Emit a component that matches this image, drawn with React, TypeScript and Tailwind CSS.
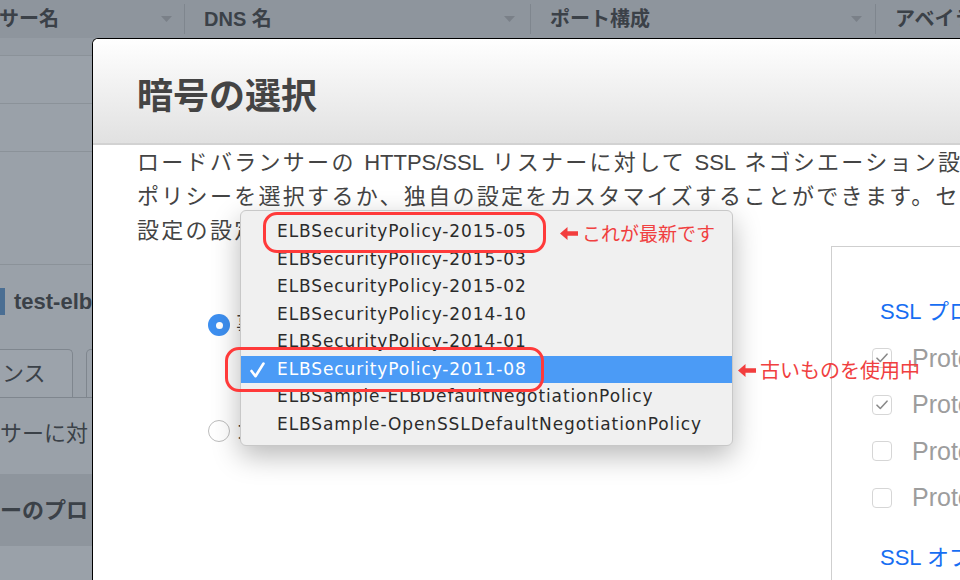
const menuItems = [
  "ELBSecurityPolicy-2015-05",
  "ELBSecurityPolicy-2015-03",
  "ELBSecurityPolicy-2015-02",
  "ELBSecurityPolicy-2014-10",
  "ELBSecurityPolicy-2014-01",
  "ELBSecurityPolicy-2011-08",
  "ELBSample-ELBDefaultNegotiationPolicy",
  "ELBSample-OpenSSLDefaultNegotiationPolicy",
];
const selected = "ELBSecurityPolicy-2011-08";

function Caret() {
  return (
    <svg width="11" height="6" viewBox="0 0 11 6" aria-hidden="true">
      <path d="M0 0h11L5.5 6z" fill="#7a8088" />
    </svg>
  );
}

function RedArrow() {
  return (
    <svg width="18" height="13" viewBox="0 0 18 13" aria-hidden="true">
      <path d="M0 6.5L7.5 0v4.2H18v4.6H7.5V13z" fill="#f23d3d" />
    </svg>
  );
}

function Checkbox({ checked }: { checked?: boolean }) {
  return (
    <div className="grid h-[20px] w-[20px] shrink-0 place-items-center rounded-[4px] border border-[#d6d6d6] bg-white">
      {checked ? (
        <svg width="12" height="10" viewBox="0 0 12 10" fill="none" aria-hidden="true">
          <path d="M1 5.2l3.3 3.3L11 1.2" stroke="#8a8a8a" strokeWidth="1.6" strokeLinecap="round" strokeLinejoin="round" />
        </svg>
      ) : null}
    </div>
  );
}

export default function App() {
  return (
    <div className="relative h-[580px] w-[960px] overflow-hidden bg-[#9aa1a9] font-['Liberation_Sans','Noto_Sans_CJK_JP',sans-serif]">
      {/* dimmed console page behind the dialog */}
      <div className="flex flex-col text-[#3b4148]">
        <div className="flex h-[38px] items-center whitespace-nowrap bg-[#8e959d] text-[20px] font-bold">
          <div className="flex h-[30px] w-[185px] shrink-0 items-center justify-between border-r border-[#7f868e] pr-[12px]">
            <span className="-ml-[1px]">サー名</span>
            <Caret />
          </div>
          <div className="flex h-[30px] w-[346px] shrink-0 items-center justify-between border-r border-[#7f868e] pl-[19px] pr-[15px]">
            <span>DNS 名</span>
            <Caret />
          </div>
          <div className="flex h-[30px] w-[345px] shrink-0 items-center justify-between border-r border-[#7f868e] pl-[19px] pr-[13px]">
            <span>ポート構成</span>
            <Caret />
          </div>
          <div className="shrink-0 pl-[19px]">アベイラビリティーゾーン</div>
        </div>
        <div className="h-[18px] border-b border-[#8b9299] bg-[#959ca4]" />
        <div className="h-[48px] border-b border-[#8b9299]" />
        <div className="h-[48px] border-b border-[#8b9299]" />
        <div className="h-[113px] border-b border-[#8b9299]" />
        <div className="h-[85px] pt-[22px]">
          <div className="flex h-[28px] items-center">
            <div className="h-[27px] w-[5px] bg-[#4a6e93]" />
            <span className="ml-[9px] text-[22px] font-bold">test-elb</span>
          </div>
        </div>
        <div className="flex h-[48px] items-end border-b border-[#7f868e]">
          <div className="flex h-[48px] w-[73px] shrink-0 items-center rounded-tr-[5px] border-r border-t border-[#7f868e] bg-[#9ca3ab] text-[22px]">
            <span className="pl-[2px]">ンス</span>
          </div>
          <div className="ml-[13px] h-[48px] w-[150px] shrink-0 rounded-t-[5px] border-l border-r border-t border-[#7f868e]" />
        </div>
        <div className="h-[76px] whitespace-nowrap pt-[21px] text-[22px] leading-[30px]">サーに対して</div>
        <div className="flex h-[72px] items-center whitespace-nowrap bg-[#8e959d] text-[22px] font-bold">ーのプロトコル</div>
      </div>

      {/* dialog */}
      <div className="absolute left-[92px] top-[38px] h-[560px] w-[900px] overflow-hidden rounded-tl-[6px] border-l border-t border-black bg-white">
        <div className="h-[106px] border-b-2 border-[#d2d2d2] bg-gradient-to-b from-white to-[#e1e1e1] pl-[44px] pt-[36px]">
          <h1 className="text-[36px] font-bold leading-[44px] text-[#444]">暗号の選択</h1>
        </div>
        <div className="pl-[44px] pt-[1px]">
          <div className="whitespace-nowrap text-[22px] leading-[34px] tracking-[2.3px] text-[#444]">
            <p>
              ロードバランサーの <span className="tracking-normal">HTTPS/SSL</span> リスナーに対して{" "}
              <span className="tracking-normal">SSL</span> ネゴシエーション設定を行います。
            </p>
            <p>ポリシーを選択するか、独自の設定をカスタマイズすることができます。セキュリティ</p>
            <p>設定の設定を変更できます。</p>
          </div>
          <div className="flex">
            <div className="flex w-[694px] shrink-0 flex-col pl-[71px] text-[22px] text-[#444]">
              <div className="mt-[66px] flex items-center gap-[6px] whitespace-nowrap">
                <div className="grid h-[22px] w-[22px] shrink-0 place-items-center rounded-full bg-[#3d8ff0]">
                  <div className="h-[7px] w-[7px] rounded-full bg-white" />
                </div>
                <span className="leading-[22px]">事前定義されたセキュリティポリシー</span>
              </div>
              <div className="mt-[84px] flex items-center gap-[6px] whitespace-nowrap">
                <div className="h-[22px] w-[22px] shrink-0 rounded-full border border-[#bdbdbd] bg-white" />
                <span className="leading-[22px]">カスタムセキュリティポリシー</span>
              </div>
            </div>
            <div className="-mt-[2px] h-[400px] w-[200px] shrink-0 border-l border-t border-[#cfcfcf] pl-[40px] pt-[50px]">
              <div className="ml-[8px] whitespace-nowrap text-[22px] leading-[30px] text-[#176ef2]">SSL プロトコル</div>
              <div className="mt-[8px] flex flex-col">
                {[true, true, false, false].map((c, i) => (
                  <div key={i} className="flex h-[46.5px] items-center gap-[20px]">
                    <Checkbox checked={c} />
                    <span className="whitespace-nowrap text-[25px] text-[#9d9d9d]">Protocol</span>
                  </div>
                ))}
              </div>
              <div className="ml-[8px] mt-[22px] whitespace-nowrap text-[22px] leading-[30px] text-[#176ef2]">SSL オプション</div>
            </div>
          </div>
        </div>
      </div>

      {/* open select menu */}
      <div className="absolute left-[240px] top-[210px] w-[493px] rounded-[6px] border border-[#c8c8c8] bg-[#f0f0f0] py-[7px] font-['DejaVu_Sans',sans-serif] text-[17px] tracking-[0.9px] text-[#2b2b2b] shadow-[0_10px_28px_rgba(0,0,0,0.28)]">
        {menuItems.map((item) => {
          const on = item === selected;
          return (
            <div
              key={item}
              className={
                on
                  ? "relative flex h-[27.5px] items-center bg-[#4b9bf6] pl-[36px] text-white"
                  : "relative flex h-[27.5px] items-center pl-[36px]"
              }
            >
              {on ? (
                <svg className="absolute left-[9px] top-[6px]" width="15" height="16" viewBox="0 0 15 16" fill="none" aria-hidden="true">
                  <path d="M1.5 9l4 5.2L13.5 1.5" stroke="white" strokeWidth="2.6" strokeLinecap="round" strokeLinejoin="round" />
                </svg>
              ) : null}
              {item}
            </div>
          );
        })}
      </div>

      {/* red annotations */}
      <div className="absolute left-[263px] top-[212px] h-[41px] w-[283px] rounded-[14px] border-[3px] border-[#ff3a3a]" />
      <div className="absolute left-[225px] top-[347px] h-[45px] w-[319px] rounded-[14px] border-[3px] border-[#ff3a3a]" />
      <div className="absolute left-[560px] top-[221px] flex items-center gap-[4px] whitespace-nowrap font-['Noto_Sans_CJK_JP',sans-serif] text-[19px] leading-[24px] text-[#f04040]">
        <RedArrow />
        <span>これが最新です</span>
      </div>
      <div className="absolute left-[738px] top-[358px] flex items-center gap-[4px] whitespace-nowrap font-['Noto_Sans_CJK_JP',sans-serif] text-[20px] leading-[24px] text-[#f04040]">
        <RedArrow />
        <span>古いものを使用中</span>
      </div>
    </div>
  );
}
